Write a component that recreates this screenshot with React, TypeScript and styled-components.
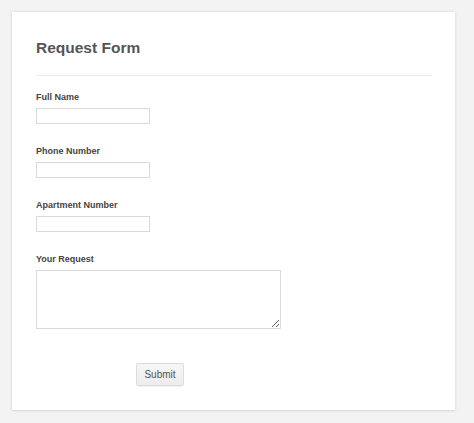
import React from "react";
import styled, { createGlobalStyle } from "styled-components";

const GlobalStyle = createGlobalStyle`
  html, body {
    margin: 0;
    padding: 0;
    background: #f3f3f3;
  }
  body {
    font-family: "Liberation Sans", Arial, sans-serif;
  }
`;

const Page = styled.div`
  width: 474px;
  height: 423px;
  padding: 12px 19px 13px 12px;
  box-sizing: border-box;
`;

const Card = styled.form`
  height: 398px;
  background: #fff;
  box-shadow: 0 0 3px rgba(0, 0, 0, 0.12), 0 1px 2px rgba(0, 0, 0, 0.06);
  padding: 27px 23px 0 24px;
  box-sizing: border-box;
  display: flex;
  flex-direction: column;
`;

const Title = styled.h1`
  margin: 0;
  font-size: 15.5px;
  line-height: 18px;
  font-weight: bold;
  color: #555;
`;

const Divider = styled.hr`
  margin: 18px 0 0;
  border: 0;
  border-top: 1px solid #ececec;
`;

const Fields = styled.div`
  display: flex;
  flex-direction: column;
  gap: 21px;
  padding-top: 15px;
`;

const Field = styled.div`
  display: flex;
  flex-direction: column;
  align-items: flex-start;
  gap: 5px;
`;

const Label = styled.label`
  font-size: 9px;
  line-height: 12px;
  font-weight: bold;
  color: #444;
`;

const TextInput = styled.input`
  width: 114px;
  height: 16px;
  box-sizing: border-box;
  border: 1px solid #d9d9d9;
  background: #fff;
  margin: 0;
  padding: 0 3px;
  outline: none;
`;

const TextArea = styled.textarea`
  width: 245px;
  height: 59px;
  box-sizing: border-box;
  border: 1px solid #d9d9d9;
  margin: 0;
  padding: 2px 3px;
  resize: both;
  outline: none;
  font-family: inherit;
`;

const Actions = styled.div`
  display: flex;
  padding: 34px 0 0 100px;
`;

const SubmitButton = styled.button`
  width: 48px;
  height: 23px;
  font-family: "Liberation Sans", Arial, sans-serif;
  font-size: 10px;
  color: #555;
  background: linear-gradient(#f7f7f7, #ececec);
  border: 1px solid #dcdcdc;
  border-radius: 2px;
  box-shadow: 0 1px 1px rgba(0, 0, 0, 0.06);
  padding: 0;
`;

const fields = ["Full Name", "Phone Number", "Apartment Number"];

export default function App() {
  return (
    <>
      <GlobalStyle />
      <Page>
        <Card onSubmit={(e) => e.preventDefault()}>
          <Title>Request Form</Title>
          <Divider />
          <Fields>
            {fields.map((name) => (
              <Field key={name}>
                <Label>{name}</Label>
                <TextInput type="text" />
              </Field>
            ))}
            <Field>
              <Label>Your Request</Label>
              <TextArea />
            </Field>
          </Fields>
          <Actions>
            <SubmitButton type="submit">Submit</SubmitButton>
          </Actions>
        </Card>
      </Page>
    </>
  );
}
